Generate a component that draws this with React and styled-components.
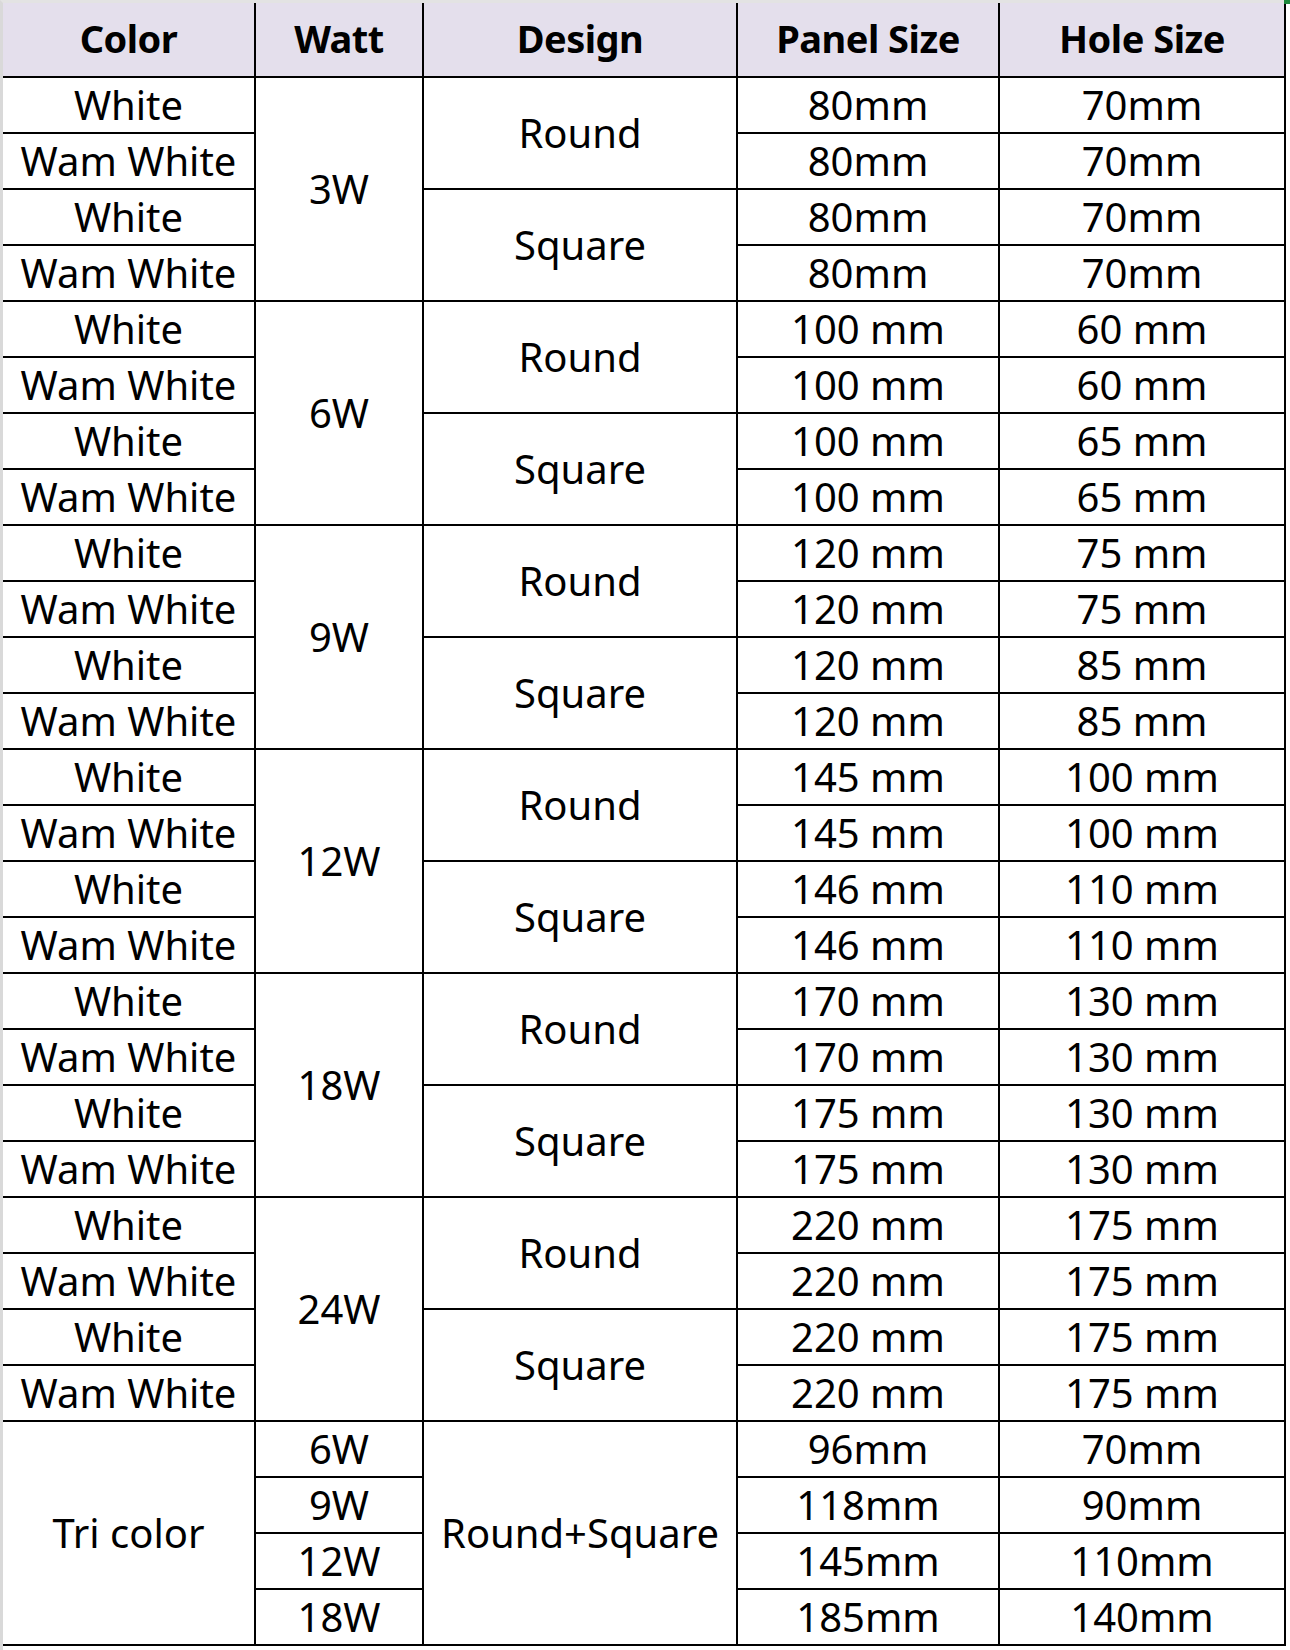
import React from "react";
import styled, { createGlobalStyle } from "styled-components";

const GlobalStyle = createGlobalStyle`
  html, body {
    margin: 0;
    padding: 0;
    background: #fff;
  }
  body {
    font-family: "Noto Sans", "Liberation Sans", sans-serif;
    color: #000;
  }
`;

const Sheet = styled.div`
  position: relative;
  width: 1290px;
  height: 1650px;
  box-sizing: border-box;
  border-top: 3px solid #e3e3e3;
  border-left: 3px solid #d9d9d9;
`;

// little excel selection handle top right
const Handle = styled.span`
  position: absolute;
  top: -3px;
  left: 1281px;
  width: 6px;
  height: 4px;
  background: #1e8a3e;
`;

const Grid = styled.div`
  display: grid;
  grid-template-columns: 253px 168px 314px 262px 286px;
  grid-template-rows: 75px repeat(28, 56px);
`;

const Cell = styled.div`
  grid-row: span ${(p) => p.$span || 1};
  box-sizing: border-box;
  display: flex;
  align-items: center;
  justify-content: center;
  border-right: 2px solid #000;
  border-bottom: 2px solid #000;
  font-size: 40px;
  line-height: 1;
  white-space: nowrap;
`;

const HeadCell = styled(Cell)`
  background: #e4dfec;
  font-weight: 700;
  font-size: 38px;
  letter-spacing: -0.5px;
  padding-bottom: 3px;
`;

const headers = ["Color", "Watt", "Design", "Panel Size", "Hole Size"];

const groups = [
  { watt: "3W", panel: ["80mm", "80mm", "80mm", "80mm"], hole: ["70mm", "70mm", "70mm", "70mm"] },
  { watt: "6W", panel: ["100 mm", "100 mm", "100 mm", "100 mm"], hole: ["60 mm", "60 mm", "65 mm", "65 mm"] },
  { watt: "9W", panel: ["120 mm", "120 mm", "120 mm", "120 mm"], hole: ["75 mm", "75 mm", "85 mm", "85 mm"] },
  { watt: "12W", panel: ["145 mm", "145 mm", "146 mm", "146 mm"], hole: ["100 mm", "100 mm", "110 mm", "110 mm"] },
  { watt: "18W", panel: ["170 mm", "170 mm", "175 mm", "175 mm"], hole: ["130 mm", "130 mm", "130 mm", "130 mm"] },
  { watt: "24W", panel: ["220 mm", "220 mm", "220 mm", "220 mm"], hole: ["175 mm", "175 mm", "175 mm", "175 mm"] },
];

const triColor = [
  { watt: "6W", panel: "96mm", hole: "70mm" },
  { watt: "9W", panel: "118mm", hole: "90mm" },
  { watt: "12W", panel: "145mm", hole: "110mm" },
  { watt: "18W", panel: "185mm", hole: "140mm" },
];

const colors = ["White", "Wam White", "White", "Wam White"];

const renderGroup = (g) =>
  colors.map((c, i) => (
    <React.Fragment key={g.watt + i}>
      <Cell>{c}</Cell>
      {i === 0 && <Cell $span={4}>{g.watt}</Cell>}
      {i === 0 && <Cell $span={2}>Round</Cell>}
      {i === 2 && <Cell $span={2}>Square</Cell>}
      <Cell>{g.panel[i]}</Cell>
      <Cell>{g.hole[i]}</Cell>
    </React.Fragment>
  ));

export default function App() {
  return (
    <>
      <GlobalStyle />
      <Sheet>
        <Handle />
        <Grid>
          {headers.map((h) => (
            <HeadCell key={h}>{h}</HeadCell>
          ))}
          {groups.map(renderGroup)}
          {triColor.map((t, i) => (
            <React.Fragment key={"tri" + i}>
              {i === 0 && <Cell $span={4}>Tri color</Cell>}
              <Cell>{t.watt}</Cell>
              {i === 0 && <Cell $span={4}>Round+Square</Cell>}
              <Cell>{t.panel}</Cell>
              <Cell>{t.hole}</Cell>
            </React.Fragment>
          ))}
        </Grid>
      </Sheet>
    </>
  );
}
